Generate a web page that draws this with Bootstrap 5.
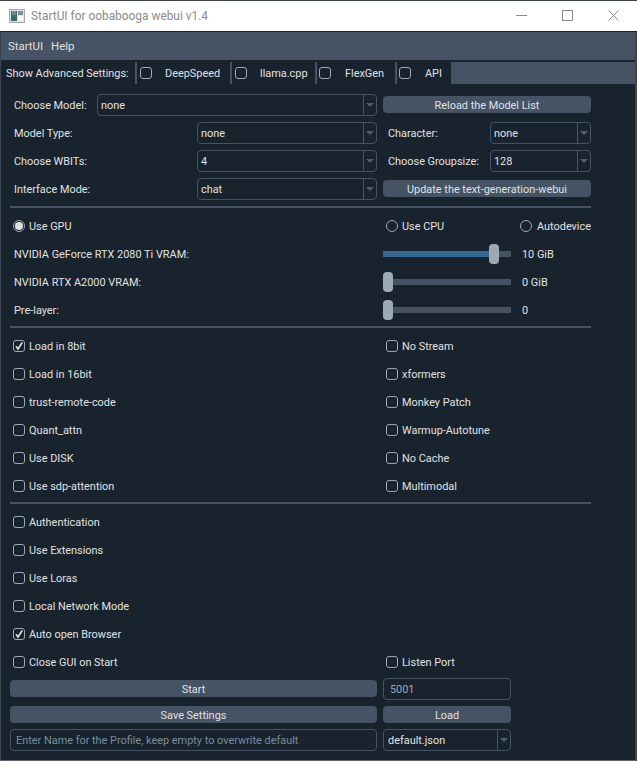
<!DOCTYPE html>
<html lang="en">
<head>
<meta charset="utf-8">
<title>StartUI for oobabooga webui v1.4</title>
<link href="https://cdn.jsdelivr.net/npm/bootstrap@5.3.0/dist/css/bootstrap.min.css" rel="stylesheet">
<style>
html,body{height:761px;overflow:hidden;margin:0;background:#19232D;}
body{font-family:Roboto,"Noto Sans","Liberation Sans",sans-serif;font-size:10.9px;color:#E0E1E3;line-height:14px;}
.win{width:637px;height:761px;border-left:1px solid #3a4552;border-right:2px solid #3a4552;border-bottom:1px solid #5a6570;display:flex;flex-direction:column;background:#19232D;}
.titlebar{height:32px;margin:0 -2px 0 -1px;background:#fff;border-top:1px solid #3c4248;border-bottom:1px solid #19232D;color:#8c8c8c;font-size:11.9px;padding-left:9px;padding-right:1px;gap:6px;flex:none;}
.winbtns{margin-left:auto;}
.winbtn{width:46px;height:28px;display:flex;align-items:center;justify-content:center;margin-bottom:2px;}
.menubar{height:29px;background:#455364;border-bottom:1px solid #19232D;padding-left:7px;gap:8px;font-size:11.4px;flex:none;}
.tabbar{height:22px;background:#455364;flex:none;margin-top:1px;}
.tabcell{background:#19232D;height:22px;border-right:2px solid #455364;display:flex;align-items:center;flex:none;white-space:nowrap;}
.tab-a{width:136px;padding-left:5px;}
.tab-b{width:95px;}
.tab-c{width:85px;}
.tab-d{width:80px;}
.tab-e{width:54px;border-right:0;}
.tabcell .tick{margin-left:3px;margin-right:13px;}
.tab-d .tick,.tab-e .tick{margin-left:2px;margin-right:14px;}
.pane{padding:7px 0 0 9px;width:582px;flex:none;}
.urow{height:28px;display:flex;align-items:center;}
.urow-a{height:26px;}
.urow-b{height:24px;}
.leftc{width:373px;flex:none;display:flex;align-items:center;height:100%;padding-right:6px;}
.rightc{width:208px;flex:none;display:flex;align-items:center;height:100%;}
.txt{position:relative;top:1px;}
.lbl{padding-left:4px;}
.lbl-c{padding-left:5px;}
.w-m{width:87px;flex:none;}
.w-t{width:187px;flex:none;}
.w-c{width:107px;flex:none;}
.combo{height:22px;flex:1 1 auto;border:1px solid #455364;border-radius:4px;display:flex;align-items:center;padding-left:3px;background:#19232D;}
.combo .arrowbox{margin-left:auto;width:13px;height:100%;border-left:1px solid #455364;display:flex;align-items:center;justify-content:center;}
.caret-d{width:0;height:0;border-left:4px solid transparent;border-right:4px solid transparent;border-top:4px solid #4f5d6e;}
.qbtn{height:17px;width:100%;background:#455364;border:0;border-radius:4px;color:#E0E1E3;font-size:inherit;line-height:15px;padding:2px 0 0;text-align:center;margin-bottom:1px;}
.sep{height:2px;background:#455364;width:581px;margin-top:2px;margin-bottom:4px;}
.sep-a{margin-top:3px;}
.tick{width:12px;height:12px;border:1px solid #9DA9B5;border-radius:3px;flex:none;display:flex;align-items:center;justify-content:center;margin-left:3px;margin-right:4px;}
.ring{width:12px;height:12px;border:1px solid #9DA9B5;border-radius:50%;flex:none;display:flex;align-items:center;justify-content:center;margin-left:3px;margin-right:4px;}
.ring i{width:8px;height:8px;border-radius:50%;background:#E0E1E3;display:block;}
.ring-auto{margin-left:auto;margin-right:5px;}
.sl{width:128px;height:6px;background:#455364;position:relative;flex:none;}
.sl .fillbar{position:absolute;left:0;top:0;bottom:0;background:#346792;}
.sl .knob{position:absolute;top:-7px;width:10px;height:20px;border-radius:4px;background:#9DA9B5;}
.slv{margin-left:11px;}
.box{height:22px;border:1px solid #455364;border-radius:4px;display:flex;align-items:center;width:128px;padding-left:6px;color:#9DA9B5;}
.w-128{width:128px;flex:none;}
.ph{color:#788D9C;padding-left:5px;width:100%;}
.combo.w-128{flex:none;padding-left:4px;}
</style>
</head>
<body>
<div class="win">
  <div class="titlebar d-flex align-items-center">
    <svg width="16" height="14" viewBox="0 0 16 14"><rect x=".5" y=".5" width="15" height="13" fill="#dfe3e4" stroke="#a4aaad"/><rect x="2" y="2" width="6" height="10" fill="#3a6b62"/><rect x="3" y="2" width="4" height="4" fill="#6f8d8c"/><rect x="9" y="2" width="5" height="4" fill="#7d8d94"/><rect x="9" y="7" width="5" height="5" fill="#fff"/></svg>
    <span>StartUI for oobabooga webui v1.4</span>
    <div class="winbtns d-flex">
      <div class="winbtn"><svg width="11" height="11" viewBox="0 0 11 11"><path d="M0 5.5H11" stroke="#8a8a8a"/></svg></div>
      <div class="winbtn"><svg width="11" height="11" viewBox="0 0 11 11"><rect x=".5" y=".5" width="10" height="10" fill="none" stroke="#8a8a8a"/></svg></div>
      <div class="winbtn"><svg width="11" height="11" viewBox="0 0 11 11"><path d="M.5 .5L10.5 10.5M10.5 .5L.5 10.5" stroke="#8a8a8a"/></svg></div>
    </div>
  </div>
  <div class="menubar d-flex align-items-center"><span>StartUI</span><span>Help</span></div>
  <div class="tabbar d-flex">
    <div class="tabcell tab-a"><span class="txt">Show Advanced Settings:</span></div>
    <div class="tabcell tab-b"><span class="tick"></span><span class="txt">DeepSpeed</span></div>
    <div class="tabcell tab-c"><span class="tick"></span><span class="txt">llama.cpp</span></div>
    <div class="tabcell tab-d"><span class="tick"></span><span class="txt">FlexGen</span></div>
    <div class="tabcell tab-e"><span class="tick"></span><span class="txt">API</span></div>
  </div>
  <div class="pane">
    <div class="urow"><div class="leftc"><span class="lbl w-m txt">Choose Model:</span><div class="combo"><span class="txt">none</span><span class="arrowbox"><span class="caret-d"></span></span></div></div><div class="rightc"><button class="qbtn">Reload the Model List</button></div></div>
    <div class="urow"><div class="leftc"><span class="lbl w-t txt">Model Type:</span><div class="combo"><span class="txt">none</span><span class="arrowbox"><span class="caret-d"></span></span></div></div><div class="rightc"><span class="lbl-c w-c txt">Character:</span><div class="combo"><span class="txt">none</span><span class="arrowbox"><span class="caret-d"></span></span></div></div></div>
    <div class="urow"><div class="leftc"><span class="lbl w-t txt">Choose WBITs:</span><div class="combo"><span class="txt">4</span><span class="arrowbox"><span class="caret-d"></span></span></div></div><div class="rightc"><span class="lbl-c w-c txt">Choose Groupsize:</span><div class="combo"><span class="txt">128</span><span class="arrowbox"><span class="caret-d"></span></span></div></div></div>
    <div class="urow"><div class="leftc"><span class="lbl w-t txt">Interface Mode:</span><div class="combo"><span class="txt">chat</span><span class="arrowbox"><span class="caret-d"></span></span></div></div><div class="rightc"><button class="qbtn">Update the text-generation-webui</button></div></div>
    <div class="sep sep-a"></div>
    <div class="urow"><div class="leftc"><span class="ring"><i></i></span><span class="txt">Use GPU</span></div><div class="rightc"><span class="ring"></span><span class="txt">Use CPU</span><span class="ring ring-auto"></span><span class="txt">Autodevice</span></div></div>
    <div class="urow"><div class="leftc"><span class="lbl txt">NVIDIA GeForce RTX 2080 Ti VRAM:</span></div><div class="rightc"><div class="sl"><div class="fillbar" style="width:106px"></div><div class="knob" style="left:106px"></div></div><span class="slv txt">10 GiB</span></div></div>
    <div class="urow"><div class="leftc"><span class="lbl txt">NVIDIA RTX A2000 VRAM:</span></div><div class="rightc"><div class="sl"><div class="knob" style="left:0"></div></div><span class="slv txt">0 GiB</span></div></div>
    <div class="urow"><div class="leftc"><span class="lbl txt">Pre-layer:</span></div><div class="rightc"><div class="sl"><div class="knob" style="left:0"></div></div><span class="slv txt">0</span></div></div>
    <div class="sep"></div>
    <div class="urow"><div class="leftc"><span class="tick"><svg width="10" height="10" viewBox="0 0 10 10"><path d="M2 5.2L4 8L8.2 1.5" fill="none" stroke="#E0E1E3" stroke-width="1.6"/></svg></span><span class="txt">Load in 8bit</span></div><div class="rightc"><span class="tick"></span><span class="txt">No Stream</span></div></div>
    <div class="urow"><div class="leftc"><span class="tick"></span><span class="txt">Load in 16bit</span></div><div class="rightc"><span class="tick"></span><span class="txt">xformers</span></div></div>
    <div class="urow"><div class="leftc"><span class="tick"></span><span class="txt">trust-remote-code</span></div><div class="rightc"><span class="tick"></span><span class="txt">Monkey Patch</span></div></div>
    <div class="urow"><div class="leftc"><span class="tick"></span><span class="txt">Quant_attn</span></div><div class="rightc"><span class="tick"></span><span class="txt">Warmup-Autotune</span></div></div>
    <div class="urow"><div class="leftc"><span class="tick"></span><span class="txt">Use DISK</span></div><div class="rightc"><span class="tick"></span><span class="txt">No Cache</span></div></div>
    <div class="urow"><div class="leftc"><span class="tick"></span><span class="txt">Use sdp-attention</span></div><div class="rightc"><span class="tick"></span><span class="txt">Multimodal</span></div></div>
    <div class="sep"></div>
    <div class="urow"><div class="leftc"><span class="tick"></span><span class="txt">Authentication</span></div></div>
    <div class="urow"><div class="leftc"><span class="tick"></span><span class="txt">Use Extensions</span></div></div>
    <div class="urow"><div class="leftc"><span class="tick"></span><span class="txt">Use Loras</span></div></div>
    <div class="urow"><div class="leftc"><span class="tick"></span><span class="txt">Local Network Mode</span></div></div>
    <div class="urow"><div class="leftc"><span class="tick"><svg width="10" height="10" viewBox="0 0 10 10"><path d="M2 5.2L4 8L8.2 1.5" fill="none" stroke="#E0E1E3" stroke-width="1.6"/></svg></span><span class="txt">Auto open Browser</span></div></div>
    <div class="urow"><div class="leftc"><span class="tick"></span><span class="txt">Close GUI on Start</span></div><div class="rightc"><span class="tick"></span><span class="txt">Listen Port</span></div></div>
    <div class="urow urow-a"><div class="leftc"><button class="qbtn">Start</button></div><div class="rightc"><div class="box"><span class="txt">5001</span></div></div></div>
    <div class="urow urow-a"><div class="leftc"><button class="qbtn">Save Settings</button></div><div class="rightc"><button class="qbtn w-128">Load</button></div></div>
    <div class="urow urow-b"><div class="leftc"><div class="combo ph"><span class="txt">Enter Name for the Profile, keep empty to overwrite default</span></div></div><div class="rightc"><div class="combo w-128"><span class="txt">default.json</span><span class="arrowbox"><span class="caret-d"></span></span></div></div></div>
  </div>
</div>
<script src="https://cdn.jsdelivr.net/npm/bootstrap@5.3.0/dist/js/bootstrap.bundle.min.js"></script>
</body>
</html>
